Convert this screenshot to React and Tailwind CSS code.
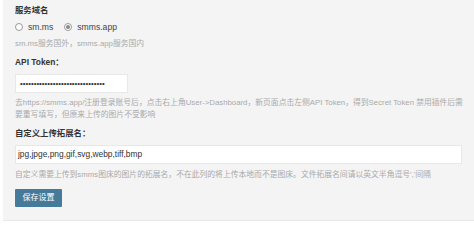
const font = { fontFamily: '"Liberation Sans", "Noto Sans CJK SC", sans-serif' };

const Radio = ({ label, checked }) => (
    <label className="flex items-center gap-[5px]">
        <span className="w-[8px] h-[8px] rounded-full border border-[#999] bg-white flex items-center justify-center">
            {checked && <span className="w-[4px] h-[4px] rounded-full bg-[#888]"></span>}
        </span>
        <span className="text-[8.6px] text-[#444]">{label}</span>
    </label>
);

const App = () => {
    return (
        <div className="w-[474px] h-[225px] bg-white" style={font}>
            <div className="ml-[3px] h-[221px] bg-[#f4f4f4] border-b border-[#e8e8e8] pl-[12px] pr-[12px] pt-[4px]">
                <h3 className="text-[8.4px] font-bold text-[#333] leading-[12px]">服务域名</h3>
                <div className="flex items-center gap-[11px] mt-[5px] h-[12px]">
                    <Radio label="sm.ms" />
                    <Radio label="smms.app" checked />
                </div>
                <p className="text-[7.8px] text-[#aaa] mt-[5px] leading-[11px]">sm.ms服务国外，smms.app服务国内</p>

                <h3 className="text-[8.4px] font-bold text-[#333] leading-[12px] mt-[7px]">API Token：</h3>
                <div className="mt-[6px] w-[113px] h-[19px] bg-white border border-[#e8e8e8] flex items-center px-[4px] text-[7.8px] text-[#333]">
                    •••••••••••••••••••••••••••••••
                </div>
                <p className="w-[449px] text-[7.8px] text-[#aaa] mt-[4px] leading-[12px]">
                    去https://smms.app/注册登录账号后，点击右上角User-&gt;Dashboard，新页面点击左侧API Token，得到Secret Token 禁用插件后需要重写填写，但原来上传的图片不受影响
                </p>

                <h3 className="text-[8.4px] font-bold text-[#333] leading-[12px] mt-[6px]">自定义上传拓展名：</h3>
                <div className="mt-[6px] w-[447px] h-[19px] bg-white border border-[#e8e8e8] flex items-center px-[2px] text-[8.4px] text-[#333]">
                    jpg,jpge,png,gif,svg,webp,tiff,bmp
                </div>
                <p className="text-[7.8px] text-[#aaa] mt-[5px] leading-[12px]">
                    自定义需要上传到smms图床的图片的拓展名，不在此列的将上传本地而不是图床。文件拓展名间请以英文半角逗号','间隔
                </p>

                <button className="mt-[8px] w-[47px] h-[18px] bg-[#457a9b] text-white text-[8px] flex items-center justify-center rounded-[1px]">
                    保存设置
                </button>
            </div>
        </div>
    );
};

export default App;
